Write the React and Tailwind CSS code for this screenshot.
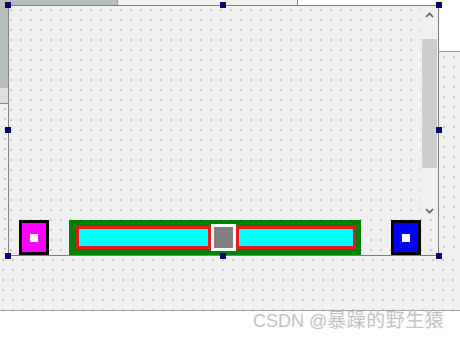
import React from 'react';

const dots =
  "bg-[#f0f0f0] bg-[radial-gradient(circle,#aaaaaa_0.55px,transparent_0.9px)] bg-[size:10px_10px]";

const Chevron = ({ up }) => (
  <svg width="9" height="6" viewBox="0 0 9 6" className="block">
    <polyline
      points={up ? "1,5 4.5,1.5 8,5" : "1,1 4.5,4.5 8,1"}
      fill="none"
      stroke="#5f5f5f"
      strokeWidth="1.6"
    />
  </svg>
);

const Square = ({ color }) => (
  <div className={`w-[30px] h-[35px] border-[3px] border-black flex items-center justify-center ${color}`}>
    <div className="w-[8px] h-[8px] bg-white" />
  </div>
);

const SliderBar = () => (
  <div className="ml-[20px] w-[292px] h-[35px] bg-[#008000] flex items-center pl-[7px] pr-[5px]">
    <div className="w-[135px] h-[23px] border-[3px] border-[#e41b1b] bg-[#00ffff]" />
    <div className="w-[25px] h-[27px] border-[3px] border-white bg-[#808080] shrink-0" />
    <div className="flex-1 h-[23px] border-[3px] border-[#e41b1b] bg-[#00ffff]" />
  </div>
);

const Widget = () => (
  <div className="w-[431px] h-[251px] shrink-0 border border-[#7f7f7f] flex flex-col">
    {/* scroll area */}
    <div className="h-[213px] flex">
      <div className={`flex-1 ${dots} bg-[position:-3px_-1px]`} />
      <div className="w-[17px] bg-[#f0f0f0] flex flex-col">
        <div className="h-[17px] flex items-center justify-center">
          <Chevron up />
        </div>
        <div className="h-[16px]" />
        <div className="h-[129px] mx-px bg-[#cdcdcd]" />
        <div className="flex-1" />
        <div className="h-[17px] flex items-center justify-center">
          <Chevron />
        </div>
      </div>
    </div>
    {/* bottom controls */}
    <div className={`h-[36px] flex items-end ${dots} bg-[position:-3px_-4px]`}>
      <div className="ml-[10px]">
        <Square color="bg-[#ff00ff]" />
      </div>
      <SliderBar />
      <div className="ml-[30px]">
        <Square color="bg-[#0000ff]" />
      </div>
    </div>
  </div>
);

const handles = [
  "left-[5px] top-[2px]",
  "left-[220px] top-[2px]",
  "left-[436px] top-[2px]",
  "left-[5px] top-[127px]",
  "left-[436px] top-[127px]",
  "left-[5px] top-[253px]",
  "left-[220px] top-[253px]",
  "left-[436px] top-[253px]",
];

export default function App() {
  return (
    <div className="relative w-[460px] h-[337px] overflow-hidden bg-white font-['Liberation_Sans','Noto_Sans_CJK_SC',sans-serif]">
      <div className="flex flex-col h-[311px] border-b border-[#a3a3a3]">
        {/* top strip */}
        <div className="flex h-[5px] shrink-0">
          <div className="w-[118px] bg-[#b6bdbd] border-r border-[#9ca2a2]" />
          <div className="w-[180px] bg-[#f0f0f0] border-r border-[#8c8c8c]" />
          <div className="flex-1 bg-white" />
        </div>

        <div className="flex h-[251px] shrink-0">
          <div className="w-[8px] flex flex-col">
            <div className="h-[83px] bg-[#b6bdbd]" />
            <div className="h-[16px] bg-[#dedede] border-b border-[#8a8a8a]" />
            <div className={`flex-1 ${dots}`} />
          </div>
          <Widget />
          <div className="flex-1 flex flex-col">
            <div className="h-[47px] bg-white border-b border-[#a0a0a0]" />
            <div className={`flex-1 ${dots}`} />
          </div>
        </div>

        <div className={`flex-1 ${dots} bg-[position:-2px_-1px]`} />
      </div>

      {/* selection handles */}
      {handles.map((pos) => (
        <div key={pos} className={`absolute w-[6px] h-[6px] bg-[#00006e] ${pos}`} />
      ))}

      {/* watermark */}
      <div className="absolute left-[253px] top-[309px] flex items-baseline leading-none text-[#c4c4c4] whitespace-nowrap">
        <span className="text-[18px]">CSDN @</span>
        <span className="text-[19px] tracking-[0.5px] font-['Noto_Sans_CJK_SC',sans-serif]">暴躁的野生猿</span>
      </div>
    </div>
  );
}
